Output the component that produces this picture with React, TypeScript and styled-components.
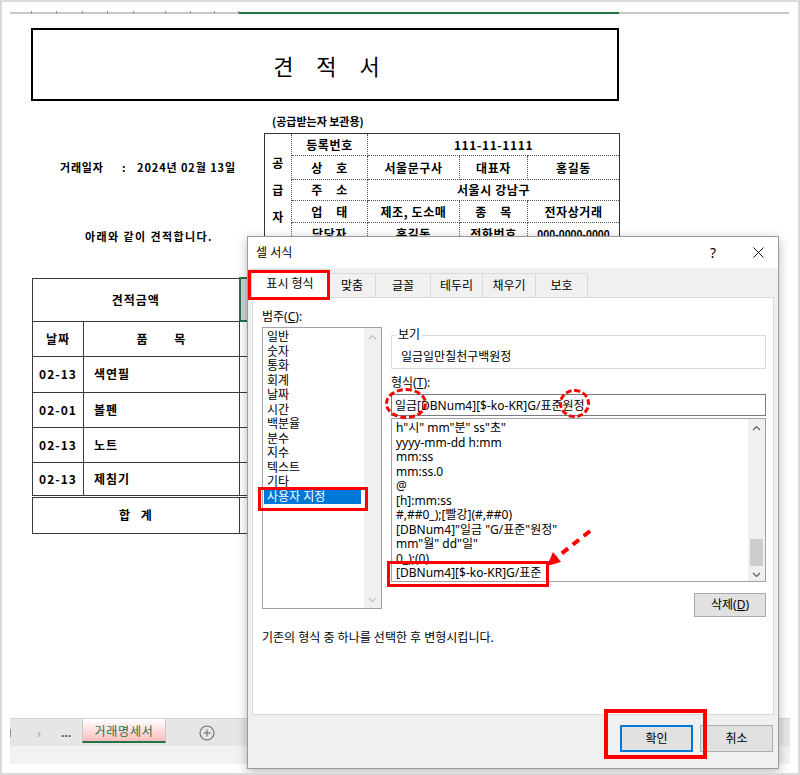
import React from 'react';
import styled, { createGlobalStyle } from 'styled-components';

const GlobalStyle = createGlobalStyle`
  html, body { margin: 0; padding: 0; background: #ffffff; }
  *, *::before, *::after { box-sizing: border-box; }
`;

const SHEET_FONT = '"Noto Sans CJK KR", "Noto Sans", sans-serif';
const UI_FONT = '"Noto Sans", "Noto Sans CJK KR", sans-serif';
const RED = '#ff0000';
const GREEN = '#217346';

const Frame = styled.div`
  position: relative;
  width: 800px;
  height: 775px;
  border: 2px solid #dadada;
  background: #fff;
  display: flex;
  flex-direction: column;
  overflow: hidden;
  font-family: ${SHEET_FONT};
  color: #000;
`;

/* ---------- sheet ---------- */

const ColumnHeader = styled.div`
  display: flex;
  margin: 10px 0 0 8px;
  height: 2px;
  flex: none;
`;

const HeaderSeg = styled.div<{ $w: number; $active?: boolean; $tick?: boolean }>`
  position: relative;
  flex: none;
  width: ${(p) => p.$w}px;
  height: 2px;
  background: ${(p) => (p.$active ? GREEN : '#c8c8c8')};
  &::after {
    content: '';
    display: ${(p) => (p.$tick ? 'block' : 'none')};
    position: absolute;
    right: 0;
    top: -1px;
    width: 1px;
    height: 3px;
    background: #9a9a9a;
  }
`;

const TitleBox = styled.div`
  flex: none;
  margin: 14px 0 0 29px;
  width: 588px;
  height: 73px;
  border: 2px solid #000;
  display: flex;
  align-items: center;
  justify-content: center;
  font-size: 22px;
  letter-spacing: 9px;
  padding-left: 12px;
  font-weight: 400;
`;

const Middle = styled.div`
  flex: none;
  display: flex;
  height: 164px;
  margin-top: 12px;
  padding-left: 58px;
`;

const LeftInfo = styled.div`
  width: 204px;
  display: flex;
  flex-direction: column;
  font-weight: 700;
  font-size: 11px;
`;

const DateLine = styled.div`
  display: flex;
  margin-top: 47px;
  line-height: 14px;
`;

const DateLabel = styled.span<{ $w: number }>`
  width: ${(p) => p.$w}px;
  flex: none;
  letter-spacing: 0.8px;
`;

const DateValue = styled.span`
  letter-spacing: 0.9px;
  white-space: nowrap;
`;

const Phrase = styled.div`
  margin: 55px 0 0 25px;
  line-height: 14px;
  letter-spacing: 1.4px;
  white-space: nowrap;
`;

const Supplier = styled.div`
  display: flex;
  flex-direction: column;
`;

const Caption = styled.div`
  margin: 2px 0 0 8px;
  font-size: 11px;
  font-weight: 700;
  line-height: 13px;
`;

const SupplierTable = styled.table`
  margin-top: 5px;
  width: 355px;
  border-collapse: collapse;
  border: 1px solid #333;
  table-layout: fixed;
`;

const Col = styled.col<{ $w: number }>`
  width: ${(p) => p.$w}px;
`;

const Row = styled.tr<{ $h: number }>`
  height: ${(p) => p.$h}px;
`;

const SCell = styled.td<{ $wide?: boolean; $small?: boolean }>`
  border: 1px dotted #555;
  padding: 0;
  text-align: center;
  font-size: ${(p) => (p.$small ? 10 : 12)}px;
  font-weight: 700;
  line-height: 14px;
  white-space: nowrap;
  overflow: hidden;
  word-spacing: ${(p) => (p.$wide ? '10px' : 'normal')};
  letter-spacing: ${(p) => (p.$small ? 0 : 0.6)}px;
`;

const Vertical = styled.div`
  display: flex;
  flex-direction: column;
  align-items: center;
  font-size: 12px;
  font-weight: 700;
  line-height: 27px;
`;

const EstTable = styled.table`
  flex: none;
  margin-left: 30px;
  border-collapse: collapse;
  table-layout: fixed;
  width: 267px;
`;

const ECell = styled.td<{ $align?: 'left' | 'center'; $spacing?: number; $double?: boolean }>`
  border: 1px solid #3a3a3a;
  border-top: ${(p) => (p.$double ? '3px double #3a3a3a' : '1px solid #3a3a3a')};
  padding: ${(p) => (p.$align === 'left' ? '0 0 0 10px' : '0')};
  text-align: ${(p) => p.$align ?? 'center'};
  font-size: 12px;
  font-weight: 700;
  line-height: 14px;
  white-space: nowrap;
  letter-spacing: 1px;
  word-spacing: ${(p) => p.$spacing ?? 0}px;
`;

const SelectedCell = styled.td`
  border: 2px solid ${GREEN};
  background: #d3d3dc;
`;

const Spacer = styled.div`
  flex: 1;
`;

const SheetBar = styled.div`
  flex: none;
  margin: 0 8px;
  height: 28px;
  background: #e6e6e6;
  border-top: 1px solid #d4d4d4;
  display: flex;
  align-items: stretch;
`;

const NavMark = styled.div`
  width: 1px;
  height: 8px;
  margin: 10px 26px 0 0;
  background: #7f9a88;
`;

const NavArrow = styled.div`
  width: 20px;
  display: flex;
  align-items: center;
  color: #a8a8a8;
  font-size: 13px;
  font-family: ${UI_FONT};
`;

const More = styled.div`
  width: 25px;
  display: flex;
  align-items: center;
  color: #3b5a46;
  font-size: 12px;
  font-weight: 700;
  padding-left: 4px;
  font-family: ${UI_FONT};
`;

const SheetTab = styled.div`
  width: 84px;
  margin-bottom: 3px;
  display: flex;
  align-items: center;
  justify-content: center;
  background: linear-gradient(#ffffff 0%, #ffe2e2 45%, #ffbcbc 100%);
  border-left: 1px solid #c8c8c8;
  border-right: 1px solid #c8c8c8;
  border-bottom: 2px solid ${GREEN};
  color: ${GREEN};
  font-size: 12px;
  letter-spacing: 0.8px;
`;

const AddSheet = styled.div`
  margin-left: 33px;
  display: flex;
  align-items: center;
`;

const StatusStrip = styled.div`
  flex: none;
  margin: 0 8px 9px;
  height: 18px;
  background: #f2f2f2;
`;

/* ---------- dialog ---------- */

const Dialog = styled.div`
  position: absolute;
  left: 245px;
  top: 234px;
  width: 532px;
  height: 533px;
  display: flex;
  flex-direction: column;
  background: #f0f0f0;
  border: 1px solid #9b9b9b;
  box-shadow: 0 3px 10px rgba(0, 0, 0, 0.28);
  font-family: ${UI_FONT};
  font-size: 12px;
  color: #000;
  z-index: 2;
`;

const TitleBar = styled.div`
  flex: none;
  height: 31px;
  display: flex;
  align-items: center;
  background: #fff;
  padding: 0 5px 0 8px;
`;

const TitleText = styled.div`
  flex: 1;
  line-height: 16px;
`;

const HelpButton = styled.div`
  width: 20px;
  margin-right: 20px;
  text-align: center;
  font-size: 14px;
  line-height: 16px;
`;

const CloseButton = styled.div`
  width: 30px;
  height: 30px;
  display: flex;
  align-items: center;
  justify-content: center;
`;

const TabsRow = styled.div`
  flex: none;
  height: 29px;
  display: flex;
  align-items: flex-end;
  padding-left: 3px;
`;

const Tab = styled.div<{ $w: number; $active?: boolean }>`
  position: relative;
  flex: none;
  width: ${(p) => p.$w}px;
  height: ${(p) => (p.$active ? 29 : 24)}px;
  margin-right: -1px;
  margin-bottom: ${(p) => (p.$active ? -1 : 0)}px;
  z-index: ${(p) => (p.$active ? 1 : 0)};
  display: flex;
  align-items: center;
  justify-content: center;
  padding-top: ${(p) => (p.$active ? 0 : 1)}px;
  background: ${(p) => (p.$active ? '#fff' : '#f0f0f0')};
  border: 1px solid #d9d9d9;
  border-bottom: none;
  line-height: 16px;
`;

const Panel = styled.div`
  flex: none;
  margin: 0 4px;
  height: 418px;
  background: #fff;
  border: 1px solid #d9d9d9;
  padding: 11px 7px 0 9px;
`;

const PanelGrid = styled.div`
  display: grid;
  grid-template-columns: 120px 375px;
  column-gap: 9px;
  align-items: start;
`;

const Column = styled.div`
  display: flex;
  flex-direction: column;
`;

const FieldLabel = styled.div<{ $top?: number }>`
  line-height: 16px;
  margin-top: ${(p) => p.$top ?? 0}px;
`;

const ListBox = styled.div<{ $h: number; $top: number }>`
  display: flex;
  height: ${(p) => p.$h}px;
  margin-top: ${(p) => p.$top}px;
  border: 1px solid #9ea3ab;
  background: #fff;
  overflow: hidden;
`;

const Items = styled.div<{ $pad: number }>`
  flex: 1;
  min-width: 0;
  padding-top: ${(p) => p.$pad}px;
  overflow: hidden;
`;

const Item = styled.div<{ $selected?: boolean; $indent: number }>`
  height: 14.5px;
  line-height: 14.5px;
  margin: 0 3px 0 1px;
  padding-left: ${(p) => p.$indent}px;
  white-space: nowrap;
  background: ${(p) => (p.$selected ? '#0078d7' : 'transparent')};
  color: ${(p) => (p.$selected ? '#fff' : '#000')};
`;

const ScrollBar = styled.div`
  flex: none;
  width: 17px;
  display: flex;
  flex-direction: column;
  background: #f0f0f0;
`;

const ScrollArrow = styled.div`
  flex: none;
  height: 17px;
  display: flex;
  align-items: center;
  justify-content: center;
`;

const Track = styled.div<{ $offset: number }>`
  flex: 1;
  padding-top: ${(p) => p.$offset}px;
  display: flex;
  justify-content: center;
`;

const Thumb = styled.div<{ $h: number }>`
  width: 13px;
  height: ${(p) => p.$h}px;
  background: #cdcdcd;
`;

const Group = styled.fieldset`
  margin: 18px 0 0;
  padding: 0 9px 3px 4px;
  border: 1px solid #dcdcdc;
  min-inline-size: auto;
`;

const Legend = styled.legend`
  padding: 0 2px;
  line-height: 16px;
`;

const Preview = styled.div`
  margin: 6px 0 0 5px;
  line-height: 16px;
`;

const FormatInput = styled.div`
  margin-top: 3px;
  height: 22px;
  border: 1px solid #7a7a7a;
  padding-left: 3px;
  display: flex;
  align-items: center;
  white-space: nowrap;
`;

/* red dashed ring drawn around a piece of the format text */
const Circled = styled.span<{ $l: number; $t: number; $w: number; $h: number }>`
  position: relative;
  &::after {
    content: '';
    position: absolute;
    left: ${(p) => p.$l}px;
    top: ${(p) => p.$t}px;
    width: ${(p) => p.$w}px;
    height: ${(p) => p.$h}px;
    border: 3px dashed ${RED};
    border-radius: 50%;
    pointer-events: none;
  }
`;

const Button = styled.div<{ $w: number; $h: number; $default?: boolean }>`
  flex: none;
  width: ${(p) => p.$w}px;
  height: ${(p) => p.$h}px;
  display: flex;
  align-items: center;
  justify-content: center;
  background: #e1e1e1;
  border: 1px solid ${(p) => (p.$default ? '#0078d7' : '#adadad')};
  box-shadow: ${(p) => (p.$default ? 'inset 0 0 0 1px #0078d7' : 'none')};
  line-height: 16px;
`;

const DeleteRow = styled.div`
  display: flex;
  justify-content: flex-end;
  margin-top: 11px;
`;

const Description = styled.div`
  margin-top: 13px;
  line-height: 16px;
`;

const Footer = styled.div`
  flex: 1;
  display: flex;
  justify-content: flex-end;
  align-items: flex-start;
  gap: 7px;
  padding: 10px 5px 0 0;
`;

/* ---------- annotations ---------- */

const Mark = styled.div<{ $x: number; $y: number; $w: number; $h: number; $b?: number }>`
  position: absolute;
  left: ${(p) => p.$x - 2}px;
  top: ${(p) => p.$y - 2}px;
  width: ${(p) => p.$w}px;
  height: ${(p) => p.$h}px;
  border: ${(p) => p.$b ?? 3}px solid ${RED};
  z-index: 3;
  pointer-events: none;
`;

const Overlay = styled.svg`
  position: absolute;
  left: -2px;
  top: -2px;
  z-index: 3;
  pointer-events: none;
`;

const Chevron: React.FC<{ up?: boolean; color: string }> = ({ up, color }) => (
  <svg width="9" height="6" viewBox="0 0 9 6">
    <polyline
      points={up ? '1,5 4.5,1.5 8,5' : '1,1 4.5,4.5 8,1'}
      fill="none"
      stroke={color}
      strokeWidth="1.2"
    />
  </svg>
);

const categories = ['일반', '숫자', '통화', '회계', '날짜', '시간', '백분율', '분수', '지수', '텍스트', '기타', '사용자 지정'];

const formats = [
  'h"시" mm"분" ss"초"',
  'yyyy-mm-dd h:mm',
  'mm:ss',
  'mm:ss.0',
  '@',
  '[h]:mm:ss',
  '#,##0_);[빨강](#,##0)',
  '[DBNum4]"일금 "G/표준"원정"',
  'mm"월" dd"일"',
  '0_);(0)',
  '[DBNum4][$-ko-KR]G/표준',
];

const items = [
  { date: '02-13', name: '색연필' },
  { date: '02-01', name: '볼펜' },
  { date: '02-13', name: '노트' },
  { date: '02-13', name: '제침기' },
];

const tabs = [
  { label: '표시 형식', w: 78, active: true },
  { label: '맞춤', w: 48 },
  { label: '글꼴', w: 56 },
  { label: '테두리', w: 53 },
  { label: '채우기', w: 54 },
  { label: '보호', w: 53 },
];

const headerTicks = [22, 25, 26, 25, 26, 32, 25, 24, 24];

const App: React.FC = () => {
  return (
    <Frame>
      <GlobalStyle />
      <ColumnHeader>
        {headerTicks.map((w, i) => (
          <HeaderSeg key={i} $w={w} $tick />
        ))}
        <HeaderSeg $w={380} $active />
        <HeaderSeg $w={170} />
      </ColumnHeader>

      <TitleBox>견 적 서</TitleBox>

      <Middle>
        <LeftInfo>
          <DateLine>
            <DateLabel $w={62}>거래일자</DateLabel>
            <DateLabel $w={15}>:</DateLabel>
            <DateValue>2024년 02월 13일</DateValue>
          </DateLine>
          <Phrase>아래와 같이 견적합니다.</Phrase>
        </LeftInfo>
        <Supplier>
          <Caption>(공급받는자 보관용)</Caption>
          <SupplierTable>
            <colgroup>
              <Col $w={27} />
              <Col $w={76} />
              <Col $w={92} />
              <Col $w={68} />
              <Col $w={92} />
            </colgroup>
            <tbody>
              <Row $h={22}>
                <SCell rowSpan={5}>
                  <Vertical>
                    <span>공</span>
                    <span>급</span>
                    <span>자</span>
                  </Vertical>
                </SCell>
                <SCell>등록번호</SCell>
                <SCell colSpan={3}>111-11-1111</SCell>
              </Row>
              <Row $h={24}>
                <SCell $wide>상 호</SCell>
                <SCell>서울문구사</SCell>
                <SCell>대표자</SCell>
                <SCell>홍길동</SCell>
              </Row>
              <Row $h={21}>
                <SCell $wide>주 소</SCell>
                <SCell colSpan={3}>서울시 강남구</SCell>
              </Row>
              <Row $h={22}>
                <SCell $wide>업 태</SCell>
                <SCell>제조, 도소매</SCell>
                <SCell $wide>종 목</SCell>
                <SCell>전자상거래</SCell>
              </Row>
              <Row $h={22}>
                <SCell>담당자</SCell>
                <SCell>홍길동</SCell>
                <SCell>전화번호</SCell>
                <SCell $small>000-0000-0000</SCell>
              </Row>
            </tbody>
          </SupplierTable>
        </Supplier>
      </Middle>

      <EstTable>
        <colgroup>
          <Col $w={51} />
          <Col $w={156} />
          <Col $w={60} />
        </colgroup>
        <tbody>
          <Row $h={43}>
            <ECell colSpan={2}>견적금액</ECell>
            <SelectedCell />
          </Row>
          <Row $h={35}>
            <ECell>날짜</ECell>
            <ECell $spacing={22}>품 목</ECell>
            <ECell />
          </Row>
          {items.map((it, i) => (
            <Row key={i} $h={i === 0 ? 36 : i === 3 ? 34 : 35}>
              <ECell>{it.date}</ECell>
              <ECell $align="left">{it.name}</ECell>
              <ECell />
            </Row>
          ))}
          <Row $h={37}>
            <ECell colSpan={2} $double $spacing={6}>
              합 계
            </ECell>
            <ECell $double />
          </Row>
        </tbody>
      </EstTable>

      <Spacer />

      <SheetBar>
        <NavMark />
        <NavArrow>›</NavArrow>
        <More>...</More>
        <SheetTab>거래명세서</SheetTab>
        <AddSheet>
          <svg width="16" height="16" viewBox="0 0 16 16">
            <circle cx="8" cy="8" r="7" fill="none" stroke="#6e6e6e" strokeWidth="1.1" />
            <line x1="8" y1="4.5" x2="8" y2="11.5" stroke="#6e6e6e" strokeWidth="1.1" />
            <line x1="4.5" y1="8" x2="11.5" y2="8" stroke="#6e6e6e" strokeWidth="1.1" />
          </svg>
        </AddSheet>
      </SheetBar>
      <StatusStrip />

      <Dialog>
        <TitleBar>
          <TitleText>셀 서식</TitleText>
          <HelpButton>?</HelpButton>
          <CloseButton>
            <svg width="11" height="11" viewBox="0 0 11 11">
              <line x1="0.5" y1="0.5" x2="10.5" y2="10.5" stroke="#111" strokeWidth="1" />
              <line x1="10.5" y1="0.5" x2="0.5" y2="10.5" stroke="#111" strokeWidth="1" />
            </svg>
          </CloseButton>
        </TitleBar>

        <TabsRow>
          {tabs.map((t) => (
            <Tab key={t.label} $w={t.w} $active={t.active}>
              {t.label}
            </Tab>
          ))}
        </TabsRow>

        <Panel>
          <PanelGrid>
            <Column>
              <FieldLabel>
                범주(<u>C</u>):
              </FieldLabel>
              <ListBox $h={282} $top={2}>
                <Items $pad={2}>
                  {categories.map((c) => (
                    <Item key={c} $indent={3} $selected={c === '사용자 지정'}>
                      {c}
                    </Item>
                  ))}
                </Items>
                <ScrollBar>
                  <ScrollArrow>
                    <Chevron up color="#c2c2c2" />
                  </ScrollArrow>
                  <Track $offset={0} />
                  <ScrollArrow>
                    <Chevron color="#c2c2c2" />
                  </ScrollArrow>
                </ScrollBar>
              </ListBox>
            </Column>

            <Column>
              <Group>
                <Legend>보기</Legend>
                <Preview>일금일만칠천구백원정</Preview>
              </Group>
              <FieldLabel $top={6}>
                형식(<u>T</u>):
              </FieldLabel>
              <FormatInput>
                <Circled $l={-10} $t={-8} $w={42} $h={31}>
                  일금
                </Circled>
                [DBNum4][$-ko-KR]G/표준
                <Circled $l={-4} $t={-7} $w={31} $h={29}>
                  원정
                </Circled>
              </FormatInput>
              <ListBox $h={164} $top={2}>
                <Items $pad={2}>
                  {formats.map((f) => (
                    <Item key={f} $indent={3}>
                      {f}
                    </Item>
                  ))}
                </Items>
                <ScrollBar>
                  <ScrollArrow>
                    <Chevron up color="#606060" />
                  </ScrollArrow>
                  <Track $offset={103}>
                    <Thumb $h={27} />
                  </Track>
                  <ScrollArrow>
                    <Chevron color="#606060" />
                  </ScrollArrow>
                </ScrollBar>
              </ListBox>
              <DeleteRow>
                <Button $w={72} $h={24}>
                  삭제(<u>D</u>)
                </Button>
              </DeleteRow>
            </Column>
          </PanelGrid>
          <Description>기존의 형식 중 하나를 선택한 후 변형시킵니다.</Description>
        </Panel>

        <Footer>
          <Button $w={73} $h={27} $default>
            확인
          </Button>
          <Button $w={73} $h={27}>
            취소
          </Button>
        </Footer>
      </Dialog>

      <Mark $x={248} $y={270} $w={82} $h={30} />
      <Mark $x={258} $y={487} $w={110} $h={24} />
      <Mark $x={387} $y={561} $w={162} $h={26} />
      <Mark $x={604} $y={709} $w={103} $h={50} $b={4} />

      <Overlay width="800" height="775" viewBox="0 0 800 775">
        <line x1="590" y1="531" x2="556" y2="558" stroke={RED} strokeWidth="4" strokeDasharray="8 6" />
        <polygon points="547,566 561,562 553,552" fill={RED} />
      </Overlay>
    </Frame>
  );
};

export default App;
